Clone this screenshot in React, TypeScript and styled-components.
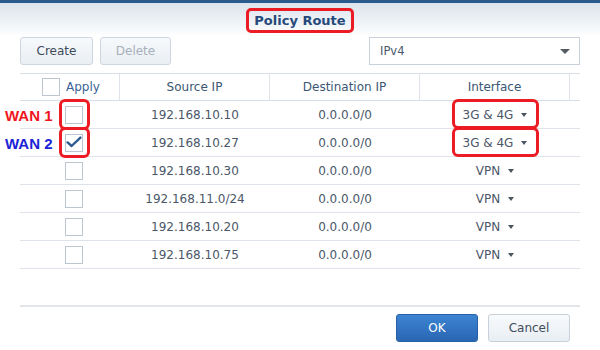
import React from 'react';
import styled, { createGlobalStyle } from 'styled-components';

const Global = createGlobalStyle`
  html, body { margin: 0; padding: 0; background: #fff; }
  body { font-family: "DejaVu Sans", Verdana, sans-serif; }
  * { box-sizing: border-box; }
`;

const Page = styled.div`
  width: 600px;
  height: 350px;
  overflow: hidden;
  border-top: 3px solid #2c5a8d;
  background: linear-gradient(#dbe3ed 0px, #eef2f6 18px, #ffffff 34px, #ffffff);
  display: flex;
  flex-direction: column;
`;

const TitleBar = styled.div`
  height: 34px;
  display: flex;
  align-items: center;
  justify-content: center;
`;

const Title = styled.div`
  font-weight: bold;
  font-size: 13px;
  line-height: 17px;
  color: #25497a;
  padding: 1px 5px;
  border: 3px solid #ec1c24;
  border-radius: 5px;
`;

const Toolbar = styled.div`
  display: flex;
  gap: 7px;
  padding: 0 20px;
  height: 28px;
`;

const ToolButton = styled.button<{ $disabled?: boolean }>`
  font-family: inherit;
  font-size: 12px;
  width: ${(p) => (p.$disabled ? 71 : 73)}px;
  height: 28px;
  border: 1px solid #cdd6e0;
  border-radius: 3px;
  background: linear-gradient(#f7f9fb, #eaeff4);
  color: ${(p) => (p.$disabled ? '#a7b0ba' : '#3e4b5b')};
  padding: 0;
`;

const Select = styled.div`
  margin-left: auto;
  width: 211px;
  height: 28px;
  border: 1px solid #c9d2dc;
  background: #fff;
  display: flex;
  align-items: center;
  justify-content: space-between;
  padding: 0 9px 0 10px;
  font-size: 11.5px;
  color: #4a5a6b;
`;

const SelectArrow = styled.span`
  width: 0;
  height: 0;
  border-left: 5px solid transparent;
  border-right: 5px solid transparent;
  border-top: 5px solid #555b63;
`;

const Table = styled.div`
  margin: 8px 20px 0;
  display: flex;
  flex-direction: column;
`;

const grid = `
  display: grid;
  grid-template-columns: 100px 150px 150px 150px 1fr;
`;

const HeadRow = styled.div`
  ${grid}
  height: 28px;
  border-top: 1px solid #d9dfe6;
  border-bottom: 1px solid #d9dfe6;
`;

const HeadCell = styled.div<{ $last?: boolean }>`
  display: flex;
  align-items: center;
  justify-content: center;
  font-size: 12px;
  color: #3b5673;
  border-right: ${(p) => (p.$last ? 'none' : '1px solid #dfe4ea')};
`;

const ApplyHead = styled(HeadCell)`
  justify-content: flex-start;
  padding-left: 22px;
  gap: 6px;
  color: #3a6397;
`;

const Row = styled.div`
  ${grid}
  height: 28px;
  border-bottom: 1px solid #dfe4ea;
`;

const Cell = styled.div`
  position: relative;
  display: flex;
  align-items: center;
  justify-content: center;
  font-size: 12px;
  color: #4b5768;
`;

const CheckCell = styled(Cell)`
  justify-content: flex-start;
  padding-left: 45px;
`;

const Box = styled.span`
  width: 18px;
  height: 18px;
  border: 1px solid #bcc6d1;
  background: #fff;
  display: inline-flex;
  align-items: center;
  justify-content: center;
  flex: none;
`;

const Caret = styled.span`
  display: inline-block;
  margin-left: 8px;
  width: 0;
  height: 0;
  border-left: 3.5px solid transparent;
  border-right: 3.5px solid transparent;
  border-top: 4px solid #4b5563;
`;

const Mark = styled.span<{ $w: number; $h: number; $left: string }>`
  position: absolute;
  top: -2px;
  left: ${(p) => p.$left};
  width: ${(p) => p.$w}px;
  height: ${(p) => p.$h}px;
  border: 3px solid #ec1c24;
  border-radius: 6px;
  pointer-events: none;
`;

const WanLabel = styled.span<{ $color: string }>`
  position: absolute;
  left: -15px;
  top: 50%;
  transform: translateY(-50%);
  font-family: "Liberation Sans", Arial, sans-serif;
  font-weight: bold;
  font-size: 15px;
  color: ${(p) => p.$color};
`;

const Spacer = styled.div`
  flex: 1;
`;

const Footer = styled.div`
  margin: 0 20px;
  border-top: 2px solid #e2e5e9;
  padding: 7px 10px 8px 0;
  display: flex;
  justify-content: flex-end;
  gap: 10px;
`;

const FooterButton = styled.button<{ $primary?: boolean }>`
  font-family: inherit;
  font-size: 12px;
  width: 82px;
  height: 28px;
  border-radius: 3px;
  padding: 0;
  border: 1px solid ${(p) => (p.$primary ? '#2760a6' : '#c8d1db')};
  background: ${(p) =>
    p.$primary ? 'linear-gradient(#3c84d2, #2966b3)' : 'linear-gradient(#f8fafc, #e9eef3)'};
  color: ${(p) => (p.$primary ? '#ffffff' : '#404c5a')};
`;

const Check = () => (
  <svg width="20" height="16" viewBox="0 0 20 16" style={{ marginTop: -1 }}>
    <path d="M2 8.5 L7 13 L18 2.5" fill="none" stroke="#2f5b91" strokeWidth="3" strokeLinecap="round" strokeLinejoin="round" />
  </svg>
);

type RowData = {
  src: string;
  iface: string;
  checked?: boolean;
  wan?: { label: string; color: string };
  mark?: boolean;
};

const rows: RowData[] = [
  { src: '192.168.10.10', iface: '3G & 4G', wan: { label: 'WAN 1', color: '#f0161e' }, mark: true },
  { src: '192.168.10.27', iface: '3G & 4G', checked: true, wan: { label: 'WAN 2', color: '#1a22d6' }, mark: true },
  { src: '192.168.10.30', iface: 'VPN' },
  { src: '192.168.11.0/24', iface: 'VPN' },
  { src: '192.168.10.20', iface: 'VPN' },
  { src: '192.168.10.75', iface: 'VPN' },
];

export default function App() {
  return (
    <>
      <Global />
      <Page>
        <TitleBar>
          <Title>Policy Route</Title>
        </TitleBar>
        <Toolbar>
          <ToolButton>Create</ToolButton>
          <ToolButton $disabled>Delete</ToolButton>
          <Select>
            <span>IPv4</span>
            <SelectArrow />
          </Select>
        </Toolbar>
        <Table>
          <HeadRow>
            <ApplyHead>
              <Box />
              <span>Apply</span>
            </ApplyHead>
            <HeadCell>Source IP</HeadCell>
            <HeadCell>Destination IP</HeadCell>
            <HeadCell>Interface</HeadCell>
            <HeadCell $last />
          </HeadRow>
          {rows.map((r, i) => (
            <Row key={i}>
              <CheckCell>
                {r.wan && <WanLabel $color={r.wan.color}>{r.wan.label}</WanLabel>}
                <Box>{r.checked && <Check />}</Box>
                {r.mark && <Mark $w={31} $h={31} $left="39px" />}
              </CheckCell>
              <Cell>{r.src}</Cell>
              <Cell>0.0.0.0/0</Cell>
              <Cell>
                {r.iface}
                <Caret />
                {r.mark && <Mark $w={87} $h={30} $left="32px" />}
              </Cell>
              <Cell />
            </Row>
          ))}
        </Table>
        <Spacer />
        <Footer>
          <FooterButton $primary>OK</FooterButton>
          <FooterButton>Cancel</FooterButton>
        </Footer>
      </Page>
    </>
  );
}
